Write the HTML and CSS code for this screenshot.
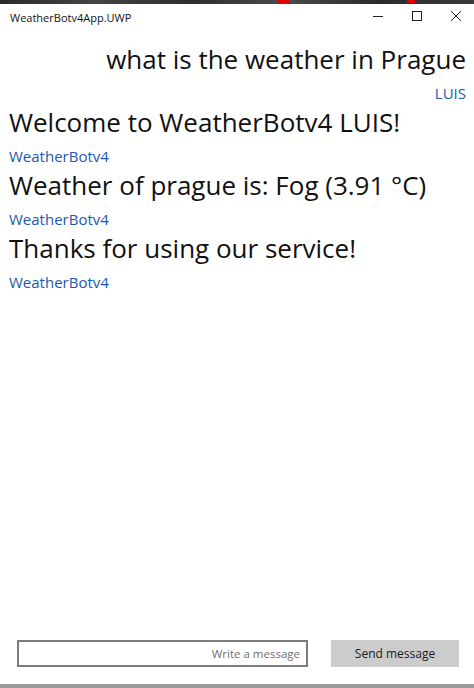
FILE: index.html
```html
<!DOCTYPE html>
<html lang="en">
<head>
  <meta charset="UTF-8">
  <meta name="viewport" content="width=device-width, initial-scale=1.0">
  <title>WeatherBotv4App.UWP</title>
  <link rel="stylesheet" href="styles.css">
</head>
<body>
  <div class="window">
    <div class="taskbar">
      <span class="speck red one"></span>
      <span class="speck red two"></span>
    </div>

    <div class="titlebar">
      <span class="app-title">WeatherBotv4App.UWP</span>
      <div class="controls">
        <span class="ctl min">
          <svg width="10" height="10" viewBox="0 0 10 10"><path d="M0 5.5h10" stroke="#222" stroke-width="1"/></svg>
        </span>
        <span class="ctl max">
          <svg width="10" height="10" viewBox="0 0 10 10"><rect x="0.5" y="0.5" width="9" height="9" fill="none" stroke="#222" stroke-width="1"/></svg>
        </span>
        <span class="ctl close">
          <svg width="10" height="10" viewBox="0 0 10 10"><path d="M0 0L10 10M10 0L0 10" stroke="#222" stroke-width="1"/></svg>
        </span>
      </div>
    </div>

    <div class="chat">
      <div class="message user">
        <p class="text">what is the weather in Prague</p>
        <p class="from">LUIS</p>
      </div>
      <div class="message">
        <p class="text">Welcome to WeatherBotv4 LUIS!</p>
        <p class="from">WeatherBotv4</p>
      </div>
      <div class="message">
        <p class="text">Weather of prague is: Fog (3.91 °C)</p>
        <p class="from">WeatherBotv4</p>
      </div>
      <div class="message">
        <p class="text">Thanks for using our service!</p>
        <p class="from">WeatherBotv4</p>
      </div>
    </div>

    <div class="composer">
      <input type="text" class="msg-input" placeholder="Write a message">
      <button class="send">Send message</button>
    </div>

    <div class="bottom-strip"></div>
  </div>
</body>
</html>
```

FILE: styles.css
```css
body, html {
  margin: 0;
  padding: 0;
  height: 100%;
  overflow: hidden;
  font-family: 'Open Sans', 'Noto Sans', sans-serif;
  background-color: #fff;
  color: #111;
}

.window {
  height: 100vh;
  display: flex;
  flex-direction: column;
}

.taskbar {
  height: 4px;
  background: linear-gradient(90deg, #2b2b2b, #444 20%, #2e2e2e 40%, #4a4a4a 60%, #2b2b2b 80%, #3a3a3a);
  position: relative;
}

.speck {
  position: absolute;
  top: 0;
  height: 3px;
}

.speck.red {
  background-color: #e00000;
}

.speck.one {
  left: 277px;
  width: 12px;
}

.speck.two {
  left: 407px;
  width: 8px;
}

.titlebar {
  height: 28px;
  display: flex;
  align-items: center;
  justify-content: space-between;
  padding-left: 10px;
}

.app-title {
  font-size: 11px;
  color: #111;
  margin-top: -2px;
}

.controls {
  display: flex;
  height: 100%;
}

.ctl {
  display: flex;
  align-items: center;
  justify-content: center;
  margin-top: -4px;
}

.ctl.min {
  width: 36px;
}

.ctl.max {
  width: 42px;
}

.ctl.close {
  width: 36px;
}

.chat {
  flex: 1;
  padding: 11px 8px 0 9px;
}

.message p {
  margin: 0;
}

.message .text {
  font-size: 26px;
  line-height: 32px;
}

.message .from {
  font-size: 15px;
  line-height: 26px;
  padding-top: 5px;
  color: #2158b0;
}

.message.user {
  text-align: right;
}

.composer {
  display: flex;
  align-items: center;
  padding: 0 15px 0 17px;
  height: 27px;
  margin-bottom: 17px;
}

.msg-input {
  width: 291px;
  height: 27px;
  box-sizing: border-box;
  border: 2px solid #7c7c7c;
  padding: 0 6px;
  text-align: right;
  font-family: 'Open Sans', sans-serif;
  font-size: 11.5px;
  outline: none;
}

.msg-input::placeholder {
  color: #6f6f6f;
}

.send {
  margin-left: auto;
  width: 128px;
  height: 27px;
  border: none;
  background-color: #cccccc;
  color: #1a1a1a;
  font-family: 'Open Sans', sans-serif;
  font-size: 12px;
  padding: 0;
}

.bottom-strip {
  height: 4px;
  background-color: #9c9c9c;
}
```
